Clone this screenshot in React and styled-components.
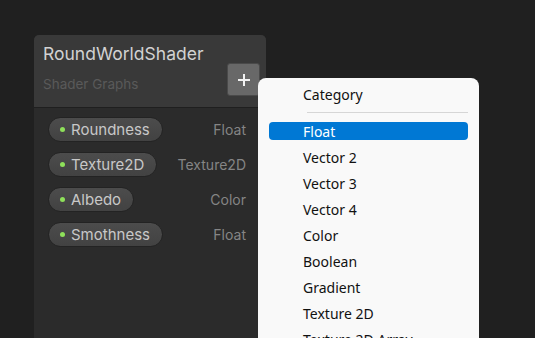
import React from "react";
import styled, { createGlobalStyle } from "styled-components";

const Global = createGlobalStyle`
  html, body { margin: 0; padding: 0; background: #202020; overflow: hidden; }
  body { width: 535px; height: 338px; font-family: Inter, "Noto Sans", sans-serif; }
  #root { position: relative; width: 535px; height: 338px; }
`;

const Stage = styled.div`
  position: relative;
  width: 535px;
  height: 338px;
  padding: 35px 0 0 34px;
  box-sizing: border-box;
  overflow: hidden;
`;

const Panel = styled.div`
  width: 232px;
  height: 320px;
  display: flex;
  flex-direction: column;
  background: #2b2b2b;
  border-radius: 5px 5px 0 0;
  overflow: hidden;
`;

const Header = styled.div`
  position: relative;
  height: 73px;
  background: #393939;
  border-bottom: 1px solid #1f1f1f;
  padding: 8px 0 0 9px;
  box-sizing: border-box;
  display: flex;
  flex-direction: column;
`;

const Title = styled.div`
  color: #d2d2d2;
  font-size: 17.5px;
  line-height: 22px;
`;

const Subtitle = styled.div`
  margin-top: 10px;
  color: #5a5a5a;
  font-size: 13.5px;
  line-height: 18px;
`;

const AddButton = styled.div`
  position: absolute;
  right: 6px;
  top: 28px;
  width: 33px;
  height: 33px;
  border-radius: 3px;
  background: #686868;
  box-sizing: border-box;
  border: 1px solid #4a4a4a;
  display: flex;
  align-items: center;
  justify-content: center;
`;

const List = styled.div`
  display: flex;
  flex-direction: column;
  gap: 10px;
  padding: 9px 20px 0 14px;
`;

const Row = styled.div`
  height: 25px;
  display: flex;
  align-items: center;
  justify-content: space-between;
`;

const Pill = styled.div`
  height: 25px;
  box-sizing: border-box;
  border-radius: 13px;
  background: linear-gradient(#4c4c4c, #424242);
  border: 1px solid #232323;
  display: flex;
  align-items: center;
  padding: 0 12px 0 11px;
  gap: 6px;
  color: #c8c8c8;
  font-size: 15px;
`;

const Dot = styled.span`
  width: 5px;
  height: 5px;
  border-radius: 50%;
  background: #8ee05a;
`;

const TypeLabel = styled.span`
  color: #858585;
  font-size: 14px;
`;

const Menu = styled.div`
  position: absolute;
  left: 258px;
  top: 78px;
  width: 221px;
  height: 300px;
  background: #f9f9f9;
  border-radius: 8px;
  padding: 6px 11px 0 11px;
  box-sizing: border-box;
  font-family: "Noto Sans", "Open Sans", sans-serif;
  font-size: 14px;
  color: #111;
`;

const MenuHeading = styled.div`
  height: 22px;
  line-height: 22px;
  padding-left: 34px;
`;

const Separator = styled.div`
  height: 1px;
  background: #d6d6d6;
  margin: 6px 0 9px 38px;
`;

const Item = styled.div`
  height: ${(p) => (p.$active ? "18px" : "26px")};
  line-height: ${(p) => (p.$active ? "19px" : "28px")};
  margin-bottom: ${(p) => (p.$active ? "4px" : "0")};
  padding-left: 34px;
  border-radius: 4px;
  background: ${(p) => (p.$active ? "#0078d4" : "transparent")};
  color: ${(p) => (p.$active ? "#ffffff" : "#111111")};
`;

const params = [
  ["Roundness", "Float"],
  ["Texture2D", "Texture2D"],
  ["Albedo", "Color"],
  ["Smothness", "Float"],
];

const items = [
  "Vector 2",
  "Vector 3",
  "Vector 4",
  "Color",
  "Boolean",
  "Gradient",
  "Texture 2D",
  "Texture 2D Array",
];

export default function App() {
  return (
    <>
      <Global />
      <Stage>
        <Panel>
          <Header>
            <Title>RoundWorldShader</Title>
            <Subtitle>Shader Graphs</Subtitle>
            <AddButton>
              <svg width="14" height="14" viewBox="0 0 14 14">
                <path d="M7 1v12M1 7h12" stroke="#f2f2f2" strokeWidth="2" />
              </svg>
            </AddButton>
          </Header>
          <List>
            {params.map(([name, type]) => (
              <Row key={name}>
                <Pill>
                  <Dot />
                  {name}
                </Pill>
                <TypeLabel>{type}</TypeLabel>
              </Row>
            ))}
          </List>
        </Panel>
        <Menu>
          <MenuHeading>Category</MenuHeading>
          <Separator />
          <Item $active>Float</Item>
          {items.map((t) => (
            <Item key={t}>{t}</Item>
          ))}
        </Menu>
      </Stage>
    </>
  );
}
